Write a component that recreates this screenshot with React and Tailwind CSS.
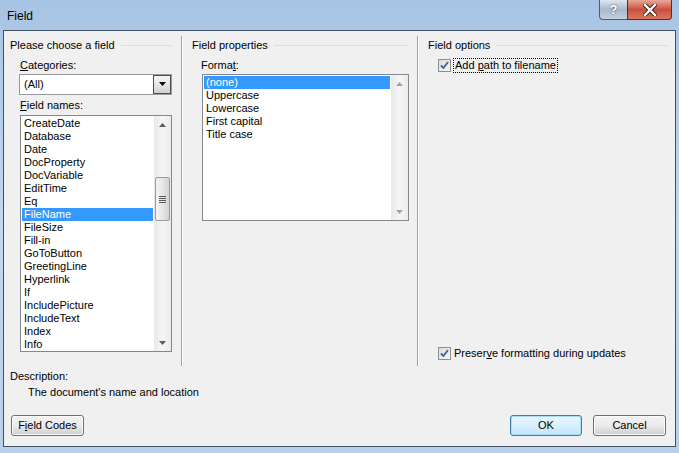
import React from 'react';

const fieldNames = [
  'CreateDate', 'Database', 'Date', 'DocProperty', 'DocVariable', 'EditTime', 'Eq',
  'FileName', 'FileSize', 'Fill-in', 'GoToButton', 'GreetingLine', 'Hyperlink', 'If',
  'IncludePicture', 'IncludeText', 'Index', 'Info',
];

const formats = ['(none)', 'Uppercase', 'Lowercase', 'First capital', 'Title case'];

const Arrow = ({ up, color }) => (
  <svg width="7" height="4" viewBox="0 0 7 4">
    {up ? <path d="M3.5 0 L7 4 L0 4 Z" fill={color} /> : <path d="M0 0 L7 0 L3.5 4 Z" fill={color} />}
  </svg>
);

const Scrollbar = ({ thumb, disabled }) => {
  const c = disabled ? '#a3a3a3' : '#5e5e5e';
  return (
    <div className="flex w-[17px] flex-col bg-gradient-to-r from-[#e9e9e9] via-[#f5f5f5] to-[#ebebeb]">
      <div className="flex h-[17px] items-center justify-center">
        <Arrow up color={c} />
      </div>
      <div className="flex-1">
        {thumb && (
          <div className="ml-[1px] mt-[44px] flex h-[44px] w-[15px] flex-col items-center justify-center gap-[1px] rounded-[2px] border border-[#9a9a9a] bg-gradient-to-r from-[#f4f4f4] via-[#e6e6e6] to-[#d2d2d2]">
            <div className="h-px w-[7px] bg-[#5a5a5a]" />
            <div className="h-px w-[7px] bg-[#5a5a5a]" />
            <div className="h-px w-[7px] bg-[#5a5a5a]" />
            <div className="h-px w-[7px] bg-[#5a5a5a]" />
          </div>
        )}
      </div>
      <div className="flex h-[17px] items-center justify-center">
        <Arrow color={c} />
      </div>
    </div>
  );
};

const ListBox = ({ items, selected, className, thumb, disabled }) => (
  <div className={`flex border border-[#828790] bg-white ${className}`}>
    <div className="flex-1 pl-px pr-px pt-px">
      {items.map((it) => (
        <div
          key={it}
          className={`h-[13px] pl-[2px] leading-[13px] ${it === selected ? 'bg-[#3399ff] text-white' : 'text-black'}`}
        >
          {it}
        </div>
      ))}
    </div>
    <Scrollbar thumb={thumb} disabled={disabled} />
  </div>
);

const GroupHeader = ({ title, className }) => (
  <div className={`flex h-[13px] items-center gap-[6px] ${className}`}>
    <span className="leading-[13px]">{title}</span>
    <div className="h-px flex-1 bg-[#d5dfe5]" />
  </div>
);

const CheckBox = () => (
  <div className="flex h-[13px] w-[13px] items-center justify-center border border-[#8e8f8f] bg-gradient-to-br from-[#dcdcdc] to-[#f6f6f6]">
    <svg width="9" height="9" viewBox="0 0 9 9">
      <path d="M1 4.5 L3.5 7 L8 1" stroke="#4a5f97" strokeWidth="1.8" fill="none" />
    </svg>
  </div>
);

const Button = ({ children, className, focused }) => (
  <div
    className={`flex h-[21px] items-center justify-center rounded-[3px] border leading-[13px] ${
      focused
        ? 'border-[#3c7fb1] bg-gradient-to-b from-[#eaf6fd] via-[#d9f0fc] to-[#bee6fd] shadow-[inset_0_0_0_1px_#a9dbf6]'
        : 'border-[#707070] bg-gradient-to-b from-[#f2f2f2] via-[#ebebeb] to-[#cfcfcf] shadow-[inset_0_0_0_1px_#fcfcfc]'
    } ${className}`}
  >
    {children}
  </div>
);

const Separator = () => (
  <div className="flex">
    <div className="w-px bg-[#a0a0a0]" />
    <div className="w-px bg-white" />
  </div>
);

export default function App() {
  return (
    <div className="flex h-[453px] w-[679px] flex-col bg-gradient-to-b from-[#a8c4e4] via-[#c2d8f0] to-[#b8d0ea] font-['Liberation_Sans',Arial,sans-serif] text-[11px] text-black">
      {/* Title bar */}
      <div className="flex h-[30px] items-start">
        <div className="pl-[7px] pt-[9px] text-[12px] leading-[14px] text-black">Field</div>
        <div className="ml-auto mr-[7px] flex h-[20px]">
          <div className="flex w-[28px] items-center justify-center rounded-bl-[4px] border border-r-0 border-t-0 border-[#4d5d73] bg-gradient-to-b from-[#dfe6ee] via-[#aab9cb] to-[#c3d0de] text-[13px] font-bold text-white [text-shadow:0_0_2px_#2a3a50]">
            ?
          </div>
          <div className="flex w-[45px] items-center justify-center rounded-br-[4px] border border-t-0 border-[#5a2a25] bg-gradient-to-b from-[#e8a898] via-[#c9503e] to-[#d9775f]">
            <svg width="14" height="12" viewBox="0 0 14 12">
              <path d="M2 1 L12 11 M12 1 L2 11" stroke="#3a1a15" strokeWidth="4.2" strokeLinecap="square" />
              <path d="M2 1 L12 11 M12 1 L2 11" stroke="#ffffff" strokeWidth="2.4" strokeLinecap="square" />
            </svg>
          </div>
        </div>
      </div>

      {/* Client area */}
      <div className="mx-[3px] mb-[6px] flex flex-1 flex-col border border-[#3f5063] bg-[#f0f0f0]">
        <div className="mt-[5px] flex h-[330px]">
          {/* Column 1 */}
          <div className="flex w-[177px] flex-col pt-[3px]">
            <GroupHeader title="Please choose a field" className="pl-[6px] pr-[9px]" />
            <div className="mt-[7px] h-[13px] pl-[16px] leading-[13px]">
              <span className="underline">C</span>ategories:
            </div>
            <div className="ml-[15px] mt-[2px] flex h-[21px] w-[153px] border border-[#9a9a9a] bg-white">
              <div className="flex-1 pl-[4px] leading-[19px]">(All)</div>
              <div className="flex w-[18px] items-start justify-center border border-[#4d4d4d] bg-gradient-to-b from-[#f6f6f6] via-[#e6e6e6] to-[#cfcfcf] pt-[6px]">
                <Arrow color="#000000" />
              </div>
            </div>
            <div className="mt-[4px] h-[13px] pl-[16px] leading-[13px]">
              <span className="underline">F</span>ield names:
            </div>
            <ListBox
              items={fieldNames}
              selected="FileName"
              thumb
              className="ml-[16px] mt-[3px] h-[237px] w-[152px]"
            />
          </div>
          <Separator />

          {/* Column 2 */}
          <div className="flex w-[234px] flex-col pt-[3px]">
            <GroupHeader title="Field properties" className="pl-[9px] pr-[9px]" />
            <div className="mt-[7px] h-[13px] pl-[18px] leading-[13px]">
              Forma<span className="underline">t</span>:
            </div>
            <ListBox
              items={formats}
              selected="(none)"
              disabled
              className="ml-[19px] mt-[2px] h-[147px] w-[207px]"
            />
          </div>
          <Separator />

          {/* Column 3 */}
          <div className="flex flex-1 flex-col pt-[3px]">
            <GroupHeader title="Field options" className="pl-[9px] pr-[7px]" />
            <div className="ml-[19px] mt-[6px] flex h-[15px] items-center">
              <CheckBox />
              <div className="ml-[2px] h-[15px] border border-dotted border-black px-px leading-[13px]">
                Add <span className="underline">p</span>ath to filename
              </div>
            </div>
            <div className="mb-[6px] ml-[19px] mt-auto flex h-[13px] items-center">
              <CheckBox />
              <div className="ml-[3px] leading-[13px]">
                Preser<span className="underline">v</span>e formatting during updates
              </div>
            </div>
          </div>
        </div>

        <div className="mt-[4px] h-[13px] pl-[6px] leading-[13px]">Description:</div>
        <div className="mt-[3px] h-[13px] pl-[24px] leading-[13px]">The document's name and location</div>

        <div className="mt-[16px] flex pr-[9px]">
          <Button className="ml-[7px] w-[73px]">
            F<span className="underline">i</span>eld Codes
          </Button>
          <Button focused className="ml-auto w-[72px]">
            OK
          </Button>
          <Button className="ml-[11px] w-[73px]">Cancel</Button>
        </div>
      </div>
    </div>
  );
}
